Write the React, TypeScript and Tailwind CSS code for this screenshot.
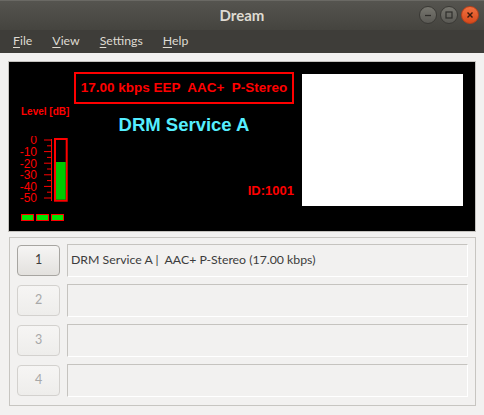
import React from "react";

const ui = { fontFamily: "Lato, 'Noto Sans', sans-serif" };
const arial = { fontFamily: "'Liberation Sans', Arial, sans-serif" };

function WinBtn({ kind }: { kind: "min" | "max" | "close" }) {
  const isClose = kind === "close";
  return (
    <div
      className={
        "w-[18px] h-[18px] rounded-full flex items-center justify-center border " +
        (isClose
          ? "bg-gradient-to-b from-[#f0703f] to-[#d8491a] border-[#b8401a]"
          : "bg-gradient-to-b from-[#77766f] to-[#5a5954] border-[#3a3935]")
      }
    >
      <svg width="10" height="10" viewBox="0 0 10 10">
        {kind === "min" && <line x1="2" y1="5.5" x2="8" y2="5.5" stroke="#2e2d2a" strokeWidth="1.3" />}
        {kind === "max" && <rect x="2" y="2" width="6" height="6" fill="none" stroke="#2e2d2a" strokeWidth="1.2" />}
        {kind === "close" && (
          <g stroke="#3a1a0c" strokeWidth="1.4">
            <line x1="2.5" y1="2.5" x2="7.5" y2="7.5" />
            <line x1="7.5" y1="2.5" x2="2.5" y2="7.5" />
          </g>
        )}
      </svg>
    </div>
  );
}

function Meter() {
  const labels = ["0", "-10", "-20", "-30", "-40", "-50"];
  const ticks = Array.from({ length: 11 }, (_, i) => 4 + i * 5.8);
  return (
    <svg width="52" height="68" viewBox="0 0 52 68" style={arial}>
      {labels.map((l, i) => (
        <text key={l} x="19" y={4 + i * 11.6 + 4.3} fontSize="12" fill="#ff0000" textAnchor="end">
          {l}
        </text>
      ))}
      <line x1="33.5" y1="3" x2="33.5" y2="65" stroke="#ff0000" strokeWidth="1" />
      {ticks.map((y, i) => (
        <line key={i} x1={i % 2 === 0 ? 26 : 29} y1={y} x2="34" y2={y} stroke="#ff0000" strokeWidth="1" />
      ))}
      <rect x="37" y="3" width="11.7" height="61.7" fill="#000" stroke="#ff0000" strokeWidth="2" />
      <rect x="38" y="26" width="9.7" height="37.7" fill="#00c800" />
    </svg>
  );
}

function Row({ n, text, active }: { n: number; text?: string; active?: boolean }) {
  return (
    <div className="flex items-center h-[33px] gap-[7px]">
      <div
        className={
          "w-[43px] h-[31px] rounded-[4px] border flex items-center justify-center text-[12.5px] bg-gradient-to-b " +
          (active
            ? "border-[#a7a5a1] from-[#f6f5f4] to-[#e3e1de] text-[#3c3c3c]"
            : "border-[#d3d1ce] from-[#f6f5f4] to-[#eeedeb] text-[#a8a8a8]")
        }
      >
        {n}
      </div>
      <div className="flex-1 h-[33px] border border-t-[#c5c3bf] border-l-[#c5c3bf] border-b-white border-r-white flex items-center pl-[3px] text-[12.3px] text-[#3c3c3c] whitespace-pre">
        {text}
      </div>
    </div>
  );
}

export default function App() {
  return (
    <div className="w-[484px] h-[415px] bg-[#f2f1f0] flex flex-col overflow-hidden" style={ui}>
      {/* title bar */}
      <div className="h-[30px] bg-gradient-to-b from-[#55544f] to-[#45443f] flex items-center relative border-t border-[#6a6964]">
        <div className="flex-1 text-center text-[15px] font-bold text-[#dfdbd2]">Dream</div>
        <div className="absolute right-[5px] top-[5px] flex gap-[3px]">
          <WinBtn kind="min" />
          <WinBtn kind="max" />
          <WinBtn kind="close" />
        </div>
      </div>
      {/* menu bar */}
      <div className="h-[23px] bg-[#3e3d39] flex items-center pl-[13px] gap-[20px] text-[12.3px] text-[#dfdbd2]">
        <span><span className="underline underline-offset-2">F</span>ile</span>
        <span><span className="underline underline-offset-2">V</span>iew</span>
        <span><span className="underline underline-offset-2">S</span>ettings</span>
        <span><span className="underline underline-offset-2">H</span>elp</span>
      </div>
      {/* display panel */}
      <div className="ml-[8px] mt-[8px] w-[468px] h-[171px] border border-[#c4c2be] bg-black flex" style={arial}>
        <div className="w-[65px] flex flex-col pl-[9px] pt-[44px]">
          <div className="ml-[3px] h-[12px] leading-[12px] text-[10px] font-bold text-[#ff0000]">Level [dB]</div>
          <div className="mt-[18px]">
            <Meter />
          </div>
          <div className="ml-[3px] mt-[10px] flex gap-[2px]">
            <div className="w-[13px] h-[7px] bg-[#00e600] border border-[#ff0000]" />
            <div className="w-[13px] h-[7px] bg-[#00e600] border border-[#ff0000]" />
            <div className="w-[13px] h-[7px] bg-[#00e600] border border-[#ff0000]" />
          </div>
        </div>
        <div className="w-[220px] flex flex-col pt-[10px]">
          <div className="h-[32px] border-2 border-[#ff0000] flex items-center justify-center text-[13.5px] font-bold text-[#ff0000] whitespace-pre">
            {"17.00 kbps EEP  AAC+  P-Stereo"}
          </div>
          <div className="mt-[10px] h-[22px] leading-[22px] text-center text-[18.5px] font-bold text-[#55eeff]">
            DRM Service A
          </div>
          <div className="mt-[47px] h-[16px] leading-[16px] text-right text-[13px] font-bold text-[#ff0000]">
            ID:1001
          </div>
        </div>
        <div className="ml-[8px] mt-[12px] w-[161px] h-[132px] bg-white" />
      </div>
      {/* services group */}
      <div className="ml-[9px] mt-[5px] w-[467px] h-[169px] border border-[#c7c5c1] pt-[6px] px-[7px] flex flex-col gap-[7px]">
        <Row n={1} active text={"DRM Service A |  AAC+ P-Stereo (17.00 kbps)"} />
        <Row n={2} />
        <Row n={3} />
        <Row n={4} />
      </div>
    </div>
  );
}
